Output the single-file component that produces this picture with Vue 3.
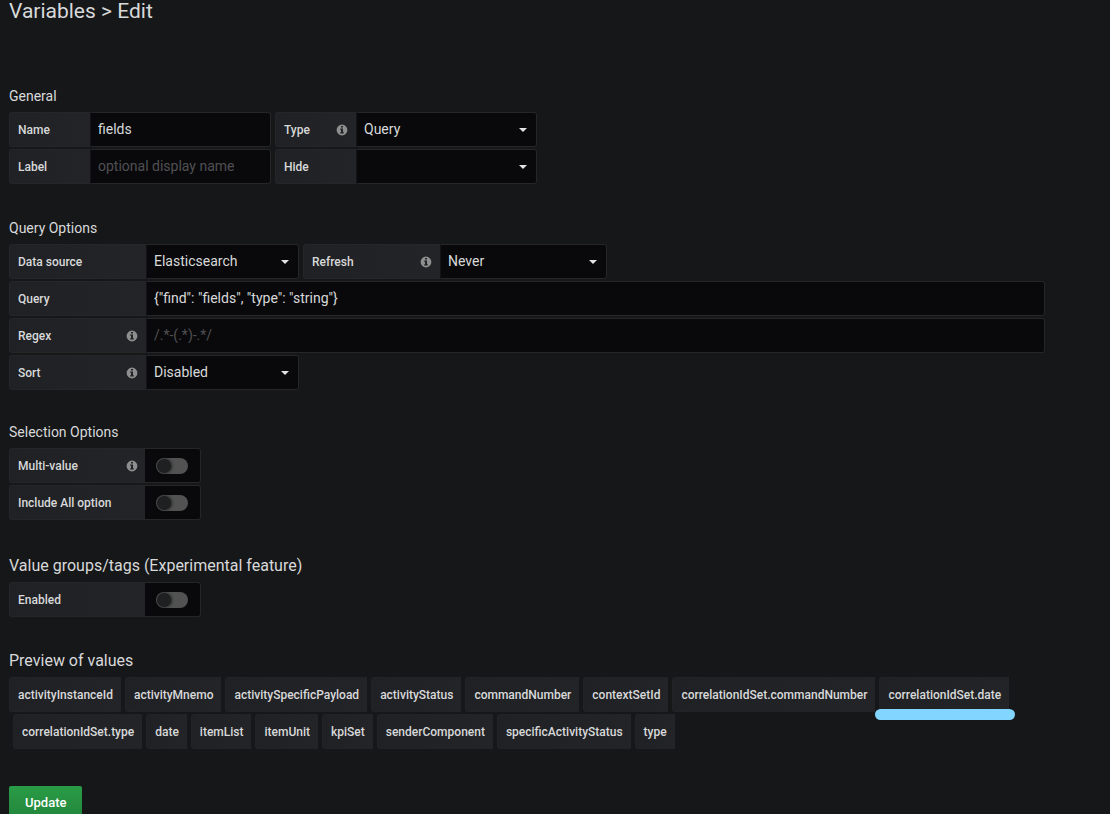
<script setup>
import { ref, h } from 'vue'

const name = ref('fields')
const label = ref('')
const type = ref('Query')
const hide = ref('')
const dataSource = ref('Elasticsearch')
const refresh = ref('Never')
const query = ref('{"find": "fields", "type": "string"}')
const regex = ref('')
const sort = ref('Disabled')
const multi = ref(false)
const includeAll = ref(false)
const tagsEnabled = ref(false)

const values = [
  'activityInstanceId',
  'activityMnemo',
  'activitySpecificPayload',
  'activityStatus',
  'commandNumber',
  'contextSetId',
  'correlationIdSet.commandNumber',
  'correlationIdSet.date',
  'correlationIdSet.type',
  'date',
  'itemList',
  'itemUnit',
  'kpiSet',
  'senderComponent',
  'specificActivityStatus',
  'type',
]
const highlighted = 'correlationIdSet.date'

const InfoIcon = () =>
  h('svg', { viewBox: '0 0 12 12', width: 12, height: 12, 'aria-hidden': 'true' }, [
    h('path', {
      fill: 'currentColor',
      'fill-rule': 'evenodd',
      d: 'M6 .6a5.4 5.4 0 1 0 0 10.8A5.4 5.4 0 0 0 6 .6zM5 2.1h2v1.5H5zM4.2 4.5H7v3.8h.8v1.3H4.2V8.3H5V5.8h-.8z',
    }),
  ])
</script>

<template>
  <main class="page">
    <h1>Variables &gt; Edit</h1>

    <form @submit.prevent>
      <section class="group">
        <h2>General</h2>
        <div class="rows">
          <div class="row">
            <div class="field">
              <label class="tag short" for="name">Name</label>
              <input id="name" v-model="name" class="control text" type="text" />
            </div>
            <div class="field">
              <label class="tag short" for="type">Type <InfoIcon class="info" /></label>
              <span class="picker wide">
                <select id="type" v-model="type" class="control">
                  <option>Query</option>
                </select>
                <svg class="caret" viewBox="0 0 8 4"><path d="M0 0h8L4 4z" /></svg>
              </span>
            </div>
          </div>
          <div class="row">
            <div class="field">
              <label class="tag short" for="label">Label</label>
              <input id="label" v-model="label" class="control text" type="text" placeholder="optional display name" />
            </div>
            <div class="field">
              <label class="tag short" for="hide">Hide</label>
              <span class="picker wide">
                <select id="hide" v-model="hide" class="control">
                  <option value=""></option>
                </select>
                <svg class="caret" viewBox="0 0 8 4"><path d="M0 0h8L4 4z" /></svg>
              </span>
            </div>
          </div>
        </div>
      </section>

      <section class="group query">
        <h2>Query Options</h2>
        <div class="rows">
          <div class="row">
            <div class="field">
              <label class="tag" for="source">Data source</label>
              <span class="picker narrow">
                <select id="source" v-model="dataSource" class="control">
                  <option>Elasticsearch</option>
                </select>
                <svg class="caret" viewBox="0 0 8 4"><path d="M0 0h8L4 4z" /></svg>
              </span>
            </div>
            <div class="field">
              <label class="tag" for="refresh">Refresh <InfoIcon class="info" /></label>
              <span class="picker medium">
                <select id="refresh" v-model="refresh" class="control">
                  <option>Never</option>
                </select>
                <svg class="caret" viewBox="0 0 8 4"><path d="M0 0h8L4 4z" /></svg>
              </span>
            </div>
          </div>
          <div class="field">
            <label class="tag" for="query">Query</label>
            <input id="query" v-model="query" class="control grow" type="text" />
          </div>
          <div class="field">
            <label class="tag" for="regex">Regex <InfoIcon class="info" /></label>
            <input id="regex" v-model="regex" class="control grow" type="text" placeholder="/.*-(.*)-.*/" />
          </div>
          <div class="field">
            <label class="tag" for="sort">Sort <InfoIcon class="info" /></label>
            <span class="picker narrow">
              <select id="sort" v-model="sort" class="control">
                <option>Disabled</option>
              </select>
              <svg class="caret" viewBox="0 0 8 4"><path d="M0 0h8L4 4z" /></svg>
            </span>
          </div>
        </div>
      </section>

      <section class="group">
        <h2>Selection Options</h2>
        <div class="rows">
          <div class="field">
            <label class="tag toggle" for="multi">Multi-value <InfoIcon class="info" /></label>
            <span class="switch"><input id="multi" v-model="multi" type="checkbox" /></span>
          </div>
          <div class="field">
            <label class="tag toggle" for="all">Include All option</label>
            <span class="switch"><input id="all" v-model="includeAll" type="checkbox" /></span>
          </div>
        </div>
      </section>

      <section class="group tags">
        <h2 class="large">Value groups/tags (Experimental feature)</h2>
        <div class="field">
          <label class="tag toggle" for="enabled">Enabled</label>
          <span class="switch"><input id="enabled" v-model="tagsEnabled" type="checkbox" /></span>
        </div>
      </section>

      <section class="preview">
        <h2 class="large">Preview of values</h2>
        <ul class="chips">
          <li v-for="v in values" :key="v" class="chip" :class="{ marked: v === highlighted }">{{ v }}</li>
        </ul>
      </section>

      <button class="update" type="submit">Update</button>
    </form>
  </main>
</template>

<style>
html,
body {
  background: #161719;
}
body {
  margin: 0;
  overflow: hidden;
}
</style>

<style scoped>
.page {
  padding: 0 9px;
  color: #d8d9da;
  font-family: Roboto, "Liberation Sans", sans-serif;
  font-size: 14px;
}
h1,
h2 {
  margin: 0;
  font-weight: 400;
}
h1 {
  margin-bottom: 64px;
  font-size: 21px;
  line-height: 22px;
}
h2 {
  margin-bottom: 6px;
  font-size: 14px;
  line-height: 20px;
}
h2.large {
  font-size: 16px;
}
.group {
  margin: 0 56px 34px 0;
}
.group.query {
  margin-bottom: 32px;
}
.group.tags {
  margin-top: 36px;
}
.rows {
  display: flex;
  flex-direction: column;
  gap: 2px;
}
.row {
  display: flex;
  gap: 4px;
}
.field {
  display: flex;
}
.tag,
.chip {
  box-sizing: border-box;
  height: 35px;
  padding: 0 8px;
  border: 1px solid #262628;
  border-right: 0;
  border-radius: 3px 0 0 3px;
  background: linear-gradient(90deg, #1f2124, #232427);
  font-size: 12px;
  font-weight: 500;
  line-height: 35px;
}
.tag {
  display: flex;
  flex: none;
  align-items: flex-start;
  justify-content: space-between;
  width: 137px;
}
.tag.short {
  width: 81px;
}
.tag.toggle {
  width: 136px;
  padding-right: 7px;
}
.info {
  align-self: center;
  color: #8e8e8e;
}
.control {
  box-sizing: border-box;
  height: 35px;
  margin: 0;
  padding: 0 7px 2px;
  border: 1px solid #262628;
  border-left-color: #141416;
  border-radius: 0 3px 3px 0;
  outline: 0;
  background: #09090b;
  color: #d8d9da;
  font: inherit;
  appearance: none;
}
.control::placeholder {
  color: #505053;
  opacity: 1;
}
.control.text {
  width: 181px;
}
.control.grow {
  flex: 1;
  min-width: 0;
}
.picker {
  position: relative;
  display: flex;
}
.picker .control {
  width: 100%;
}
.wide {
  width: 181px;
}
.medium {
  width: 167px;
}
.narrow {
  width: 153px;
}
.caret {
  position: absolute;
  top: 16px;
  right: 10px;
  width: 8px;
  height: 4px;
  fill: #e3e3e3;
  pointer-events: none;
}
.switch {
  box-sizing: border-box;
  display: flex;
  align-items: center;
  width: 56px;
  height: 35px;
  padding-left: 11px;
  border: 1px solid #262628;
  border-left: 0;
  border-radius: 0 3px 3px 0;
  background: #09090b;
}
.switch input {
  display: flex;
  align-items: center;
  width: 32px;
  height: 16px;
  margin: 0;
  padding: 0 1px;
  box-sizing: border-box;
  border-radius: 8px;
  background: #525252;
  appearance: none;
}
.switch input::before {
  width: 14px;
  height: 14px;
  border-radius: 50%;
  background: #1f2022;
  box-shadow: 1px 0 3px #1f2022;
  content: "";
}
.switch input:checked {
  justify-content: flex-end;
}
.chips {
  display: flex;
  flex-wrap: wrap;
  row-gap: 2px;
  margin: 0 0 37px;
  padding: 0;
  list-style: none;
}
.chip {
  margin-left: 4px;
  border-color: #222326;
}
.chip:first-child {
  margin-left: 0;
}
.marked {
  position: relative;
}
.marked::after {
  position: absolute;
  right: -6px;
  bottom: -9px;
  left: -5px;
  height: 11px;
  border-radius: 6px;
  background: #82d5ff;
  content: "";
}
.update {
  display: block;
  height: 35px;
  padding: 0 16px 2px;
  border: 0;
  border-radius: 2px;
  background: linear-gradient(#299c46, #23843b);
  color: #fff;
  font: 500 13px/33px Roboto, "Liberation Sans", sans-serif;
}
</style>
